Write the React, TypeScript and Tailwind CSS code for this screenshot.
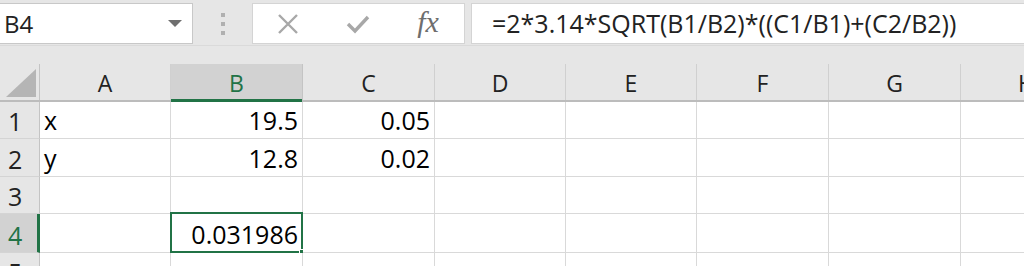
import React from "react";

const COLS = [
  { key: "A", w: 131 },
  { key: "B", w: 132 },
  { key: "C", w: 132 },
  { key: "D", w: 131 },
  { key: "E", w: 131 },
  { key: "F", w: 132 },
  { key: "G", w: 132 },
  { key: "H", w: 132 },
];

const ROWS: { n: number; h: number; cells: Record<string, string> }[] = [
  { n: 1, h: 37, cells: { A: "x", B: "19.5", C: "0.05" } },
  { n: 2, h: 38, cells: { A: "y", B: "12.8", C: "0.02" } },
  { n: 3, h: 37, cells: {} },
  { n: 4, h: 39, cells: { B: "0.031986" } },
  { n: 5, h: 37, cells: {} },
];

const isNum = (s: string) => /^[0-9.]+$/.test(s);

export default function App() {
  return (
    <div className="w-[1024px] h-[266px] overflow-hidden bg-[#e6e6e6] font-['Open_Sans',sans-serif] text-[#000]">
      {/* formula toolbar */}
      <div className="flex items-start h-[46px] pt-[3px] border-b border-[#dadada]">
        <div className="-ml-px w-[194px] h-[41px] bg-white border border-[#c8c8c8] flex items-center justify-between pl-[4px] pr-[10px]">
          <span className="text-[24px] leading-none text-[#222]">B4</span>
          <svg width="14" height="8" viewBox="0 0 14 8">
            <polygon points="0,0 14,0 7,7" fill="#6f6f6f" />
          </svg>
        </div>
        <div className="w-[59px] h-[41px] flex flex-col items-center justify-center gap-[5px]">
          <span className="block w-[4px] h-[4px] bg-[#b0b0b0]" />
          <span className="block w-[4px] h-[4px] bg-[#b0b0b0]" />
          <span className="block w-[4px] h-[4px] bg-[#b0b0b0]" />
        </div>
        <div className="w-[213px] h-[41px] bg-white border border-[#d4d4d4] flex items-center">
          <div className="w-[70px] flex justify-center">
            <svg width="22" height="22" viewBox="0 0 22 22">
              <path d="M2 2 L20 20 M20 2 L2 20" stroke="#a8a8a8" strokeWidth="2.4" />
            </svg>
          </div>
          <div className="w-[70px] flex justify-center">
            <svg width="24" height="20" viewBox="0 0 24 20">
              <path d="M2 10 L9 17 L22 3" stroke="#a8a8a8" strokeWidth="3.4" fill="none" />
            </svg>
          </div>
          <div className="w-[70px] flex justify-center">
            <span className="font-['Liberation_Serif',serif] italic text-[30px] leading-none text-[#6e6e6e] -mt-[3px]">
              fx
            </span>
          </div>
        </div>
        <div className="ml-[6px] flex-1 h-[41px] bg-white border border-[#d4d4d4] border-r-0 flex items-center pl-[20px]">
          <span className="text-[25px] leading-none text-[#222] whitespace-nowrap">
            =2*3.14*SQRT(B1/B2)*((C1/B1)+(C2/B2))
          </span>
        </div>
      </div>

      <div className="h-[18px]" />

      {/* grid */}
      <div className="flex flex-col">
        {/* header row */}
        <div className="flex h-[38px] border-b-2 border-[#bcbcbc]">
          <div className="w-[40px] shrink-0 border-r border-[#c4c4c4] flex items-end justify-end pr-[3px] pb-[3px]">
            <svg width="30" height="28" viewBox="0 0 30 28">
              <polygon points="30,0 30,28 0,28" fill="#b5b5b5" />
            </svg>
          </div>
          {COLS.map((c) => {
            const sel = c.key === "B";
            return (
              <div
                key={c.key}
                style={{ width: c.w }}
                className={
                  sel
                    ? "shrink-0 relative bg-[#d2d2d2] border-r border-[#c4c4c4] flex items-center justify-center text-[23px] leading-none text-[#217346]"
                    : "shrink-0 border-r border-[#d0d0d0] flex items-center justify-center text-[23px] leading-none text-[#222]"
                }
              >
                <span className="mt-[2px]">{c.key}</span>
                {sel && <span className="absolute left-0 right-0 -bottom-[2px] h-[3px] bg-[#217346]" />}
              </div>
            );
          })}
        </div>

        {ROWS.map((r) => (
          <div key={r.n} className="flex" style={{ height: r.h }}>
            <div
              className={
                r.n === 4
                  ? "w-[40px] shrink-0 bg-[#d2d2d2] border-b border-[#d4d4d4] border-r-[3px] border-r-[#217346] flex items-end pl-[8px] pb-[4px] text-[25px] leading-none text-[#217346]"
                  : "w-[40px] shrink-0 border-b border-[#d4d4d4] border-r border-r-[#c4c4c4] flex items-end pl-[8px] pb-[4px] text-[25px] leading-none text-[#222]"
              }
            >
              {r.n}
            </div>
            {COLS.map((c) => {
              const v = r.cells[c.key];
              const sel = r.n === 4 && c.key === "B";
              return (
                <div
                  key={c.key}
                  style={{ width: c.w }}
                  className={
                    "shrink-0 relative bg-white border-b border-r border-[#d9d9d9] flex items-end pb-[5px] px-[4px] text-[25px] leading-none " +
                    (v && isNum(v) ? "justify-end" : "justify-start")
                  }
                >
                  {v && <span>{v}</span>}
                  {sel && (
                    <>
                      <span className="absolute -left-px -top-[2px] -right-px -bottom-px border-2 border-[#217346]" />
                      <span className="absolute -right-[4px] -bottom-[4px] w-[7px] h-[7px] bg-[#217346] border border-white" />
                    </>
                  )}
                </div>
              );
            })}
          </div>
        ))}
      </div>
    </div>
  );
}
